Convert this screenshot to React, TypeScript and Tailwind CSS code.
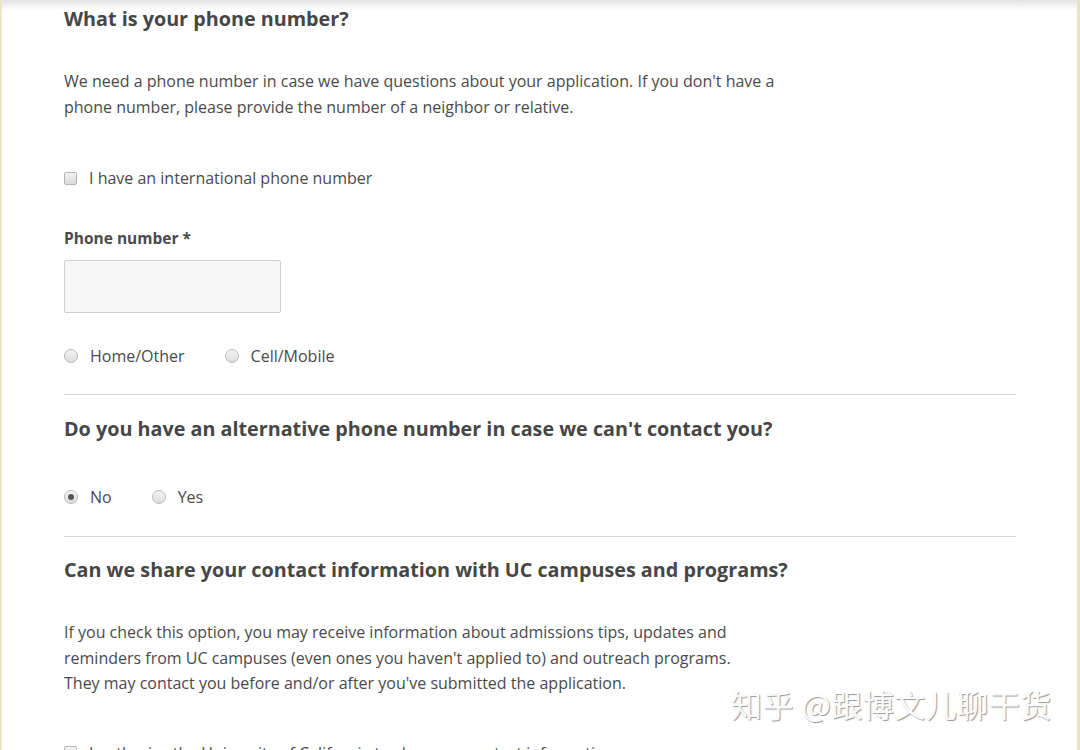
import React from "react";

const font = { fontFamily: '"Open Sans", "Noto Sans", sans-serif' };

function Radio({ checked, label }: { checked?: boolean; label: string }) {
  return (
    <label className="flex items-center gap-[12px]">
      <span className="flex h-[14px] w-[14px] items-center justify-center rounded-full border border-[#b9b9b9] bg-gradient-to-b from-[#f4f4f4] to-[#dcdcdc]">
        {checked && <span className="h-[6px] w-[6px] rounded-full bg-[#555]" />}
      </span>
      <span className="text-[16px] text-[#4a4a4a]">{label}</span>
    </label>
  );
}

function Checkbox({ label }: { label: string }) {
  return (
    <label className="flex items-center gap-[12px]">
      <span className="h-[13px] w-[13px] rounded-[2px] border border-[#b5b5b5] bg-gradient-to-b from-[#f3f3f3] to-[#dadada]" />
      <span className="text-[16px] text-[#4a4a4a]">{label}</span>
    </label>
  );
}

export default function App() {
  return (
    <div
      className="relative h-[750px] w-[1080px] overflow-hidden border-l-[2px] border-r-[3px] border-l-[#e9e7c4] border-r-[#e6e4c8] bg-white"
      style={font}
    >
      <div className="absolute inset-x-0 top-0 h-[10px] bg-gradient-to-b from-[#e2e2e2] to-transparent" />

      <div className="w-[951px] pl-[62px] pt-[5px]">
        <h2 className="text-[19.75px] font-bold leading-[28px] text-[#464646]">What is your phone number?</h2>

        <p className="mt-[35px] text-[16px] leading-[26px] text-[#4a4a4a]">
          We need a phone number in case we have questions about your application. If you don't have a
          <br />
          phone number, please provide the number of a neighbor or relative.
        </p>

        <div className="mt-[46px]">
          <Checkbox label="I have an international phone number" />
        </div>

        <div className="mt-[36px] text-[15.5px] font-bold leading-[24px] text-[#4a4a4a]">Phone number *</div>
        <div className="mt-[10px] h-[53px] w-[217px] rounded-[2px] border border-[#cfcfcf] bg-[#f7f7f7]" />

        <div className="mt-[31px] flex gap-[40px]">
          <Radio label="Home/Other" />
          <Radio label="Cell/Mobile" />
        </div>

        <div className="mt-[26px] h-px w-[952px] bg-[#d6d6d6]" />

        <h2 className="mt-[20px] text-[19.75px] font-bold leading-[28px] text-[#464646]">
          Do you have an alternative phone number in case we can't contact you?
        </h2>

        <div className="mt-[42px] flex gap-[40px]">
          <Radio checked label="No" />
          <Radio label="Yes" />
        </div>

        <div className="mt-[27px] h-px w-[952px] bg-[#d6d6d6]" />

        <h2 className="mt-[19px] text-[19.75px] font-bold leading-[28px] text-[#464646]">
          Can we share your contact information with UC campuses and programs?
        </h2>

        <p className="mt-[36px] text-[16px] leading-[25.5px] text-[#4a4a4a]">
          If you check this option, you may receive information about admissions tips, updates and
          <br />
          reminders from UC campuses (even ones you haven't applied to) and outreach programs.
          <br />
          They may contact you before and/or after you've submitted the application.
        </p>

        <div className="mt-[44px]">
          <Checkbox label="I authorize the University of California to share my contact information." />
        </div>
      </div>

      <div
        className="absolute left-[729px] top-[684px] text-[31px] leading-[40px] tracking-[0.5px] text-[#fbfbfb] [text-shadow:1px_1px_1px_rgba(0,0,0,0.4)]"
        style={{ fontFamily: '"Noto Sans CJK SC", sans-serif' }}
      >
        知乎 @跟博文儿聊干货
      </div>
    </div>
  );
}
